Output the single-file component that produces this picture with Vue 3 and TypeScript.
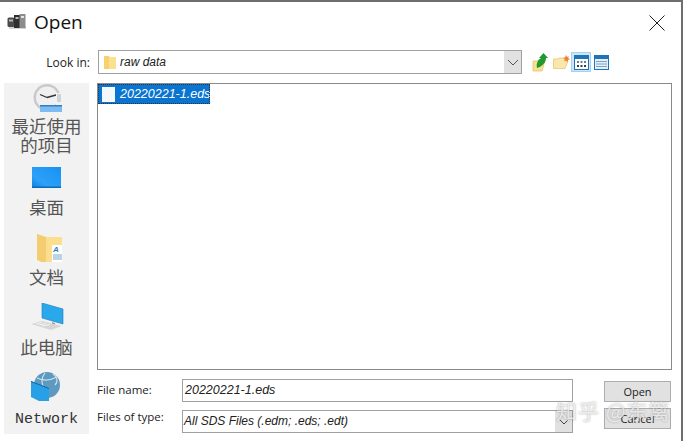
<script setup lang="ts">
const places = ['recent', 'desktop', 'docs', 'pc', 'net']
</script>

<template>
  <div class="dialog">
    <header class="title">
      <svg class="appicon" width="20" height="16" viewBox="0 0 20 16">
        <rect x="2" y="13" width="17" height="3" fill="#d4d4d4" />
        <rect x="0.5" y="4.500" width="7" height="9.500" rx="1.500" fill="#4a4a4a" />
        <rect x="7" y="2" width="6" height="13" fill="#2e2e2e" />
        <rect x="12.500" y="1" width="6" height="14" fill="#8c8c8c" />
        <rect x="14" y="3" width="3" height="2" fill="#e4e4e4" />
        <rect x="8.500" y="4" width="3" height="2" fill="#c2c2c2" />
        <rect x="2" y="6.500" width="4" height="2" fill="#b5b5b5" />
      </svg>
      <span class="titletext">Open</span>
      <svg class="close" width="16" height="16" viewBox="0 0 16 16">
        <path d="M0.500 0.500 L15.500 15.500 M15.500 0.500 L0.500 15.500" stroke="#222" stroke-width="1" fill="none" />
      </svg>
    </header>

    <div class="lookrow">
      <label class="looklabel">Look in:</label>
      <div class="combo">
        <svg width="12" height="14" viewBox="0 0 12 14" class="folder">
          <path d="M0 1 H5 L6 2 H12 V14 H0 Z" fill="#fbe08e" />
          <rect x="0" y="1" width="5" height="13" fill="#f7d070" />
        </svg>
        <span class="combotext">raw data</span>
        <span class="arrow">
          <svg width="12" height="7" viewBox="0 0 12 7"><path d="M1 1 L6 6 L11 1" stroke="#555" fill="none" /></svg>
        </span>
      </div>
      <div class="tools">
        <svg width="17" height="20" viewBox="0 0 17 20">
          <path d="M1 9 H5 L6 8 H13 L10 19 H1 Z" fill="#f8e092" stroke="#e0bd5c" stroke-width="0.700" />
          <path d="M5 16 C4 11 6 8 9 6 L7 6 L11.500 1 L16 6 L14 6 C14 10 11 14 5 16 Z" fill="#1e9a30" />
        </svg>
        <svg width="17" height="14" viewBox="0 0 17 14">
          <path d="M0.500 4 H5 L6 3 H12 V6 H15 L12 13.500 H0.500 Z" fill="#fae7ab" stroke="#e2c268" stroke-width="0.700" />
          <path d="M13 0 L14 2 L16 1 L15 3 L17 4 L15 5 L15 7 L13 5.500 L11 6 L12 4 L10 3 L12 2.500 Z" fill="#f0803c" />
        </svg>
        <span class="viewbtn active">
          <svg width="15" height="15" viewBox="0 0 15 15">
            <rect x="0.500" y="0.500" width="14" height="14" fill="#fff" stroke="#1f73b7" />
            <rect x="0" y="0" width="15" height="4" fill="#1f73b7" />
            <path d="M3 6h2v2H3zM6.500 6h2v2h-2zM10 6h2v2h-2z" fill="#6e7f90" />
            <path d="M3 10h2v2H3zM6.500 10h2v2h-2zM10 10h2v2h-2z" fill="#34404c" />
          </svg>
        </span>
        <svg class="details" width="15" height="15" viewBox="0 0 15 15">
          <rect x="0.500" y="0.500" width="14" height="14" fill="#e3f0fb" stroke="#1f73b7" />
          <rect x="0" y="0" width="15" height="4" fill="#1f73b7" />
          <path d="M2 6.500h11M2 9h11M2 11.500h11" stroke="#7fa3c0" stroke-width="1" />
        </svg>
      </div>
    </div>

    <div class="main">
      <aside class="side" :data-items="places.length">
        <div class="place p-recent">
          <svg width="32" height="28" viewBox="0 0 32 28">
            <circle cx="15" cy="13.500" r="13.500" fill="#c9c9c9" />
            <circle cx="15" cy="13.500" r="11" fill="#f0f0f0" />
            <path d="M15 13.500 L8 10.500 M15 13.500 L24 11" stroke="#333" stroke-width="1.300" />
            <rect x="24" y="9" width="6" height="13" fill="#f2f2f2" />
            <path d="M25 11h4M25 13h4M25 15h4M25 17h4" stroke="#a4b4c4" />
            <rect x="8" y="21" width="22" height="7" fill="#7dbcf0" />
            <rect x="8" y="21" width="22" height="1.500" fill="#2e7fc4" />
          </svg>
          <div class="lbl">最近使用<br />的项目</div>
        </div>
        <div class="place p-desktop">
          <svg width="29" height="21" viewBox="0 0 29 21">
            <defs>
              <linearGradient id="dg" x1="0" y1="1" x2="1" y2="0">
                <stop offset="0" stop-color="#0c7fe0" />
                <stop offset="0.300" stop-color="#2ea0f8" />
                <stop offset="1" stop-color="#1592f4" />
              </linearGradient>
            </defs>
            <rect width="29" height="21" fill="url(#dg)" />
            <rect y="19.500" width="29" height="1.500" fill="#0d6ab8" />
          </svg>
          <div class="lbl">桌面</div>
        </div>
        <div class="place p-docs">
          <svg width="25" height="28" viewBox="0 0 25 28">
            <path d="M0 0 L8 3 H25 V28 H5 L0 26 Z" fill="#fbdf8e" />
            <path d="M0 0 L9 3 V28 H5 L0 26 Z" fill="#f4cd70" />
            <rect x="15" y="11" width="10" height="17" fill="#fff" />
            <text x="16" y="18" class="doca">A</text>
            <path d="M16 21h9M16 23h9M16 25h9" stroke="#79a9c9" />
          </svg>
          <div class="lbl">文档</div>
        </div>
        <div class="place p-pc">
          <svg width="33" height="28" viewBox="0 0 33 28">
            <path d="M11 0 L32 6 V21 L11 15 Z" fill="#2aa8ec" stroke="#1a7cb8" stroke-width="0.600" />
            <path d="M21 19 L24 20 V23 L21 22 Z" fill="#999" />
            <path d="M0 21 L11 18 L31 23 L20 27 Z" fill="#d6d6d6" />
            <path d="M5 21 L11 19.500 M8 22 L15 20.500 M11 23 L19 21.500" stroke="#f3f3f3" />
          </svg>
          <div class="lbl">此电脑</div>
        </div>
        <div class="place p-net">
          <svg width="30" height="29" viewBox="0 0 30 29">
            <circle cx="16" cy="13" r="13" fill="#5d99c0" />
            <path d="M14 1 C10 6 10 12 14 18 M22 2 C27 5 27 10 24 13 M6 6 C12 9 20 8 26 5" stroke="#cfe0ea" stroke-width="1.200" fill="none" />
            <path d="M0 9 L18 16 V29 H8 L0 25 Z" fill="#27a0e6" />
            <path d="M0 9 L18 16 V17 L0 10 Z" fill="#13699f" />
          </svg>
          <div class="lbl net">Network</div>
        </div>
      </aside>

      <div class="content">
        <div class="list">
          <div class="item">
            <span class="fileicon"></span>
            <span class="filename">20220221-1.eds</span>
          </div>
        </div>
        <div class="fields">
          <div class="frow first">
            <label class="flabel">File name:</label>
            <div class="input">20220221-1.eds</div>
            <button class="btn">Open</button>
          </div>
          <div class="frow second">
            <label class="flabel">Files of type:</label>
            <div class="input select">
              <span>All SDS Files (.edm; .eds; .edt)</span>
              <span class="sarrow">
                <svg width="12" height="7" viewBox="0 0 12 7"><path d="M1 1 L6 6 L11 1" stroke="#444" fill="none" /></svg>
              </span>
            </div>
            <button class="btn">Cancel</button>
          </div>
        </div>
      </div>
    </div>

    <div class="watermark">知乎 @东篱</div>
  </div>
</template>

<style>
html, body { margin: 0; background: #fff; }
</style>

<style scoped>
.dialog {
  position: relative;
  box-sizing: border-box;
  width: 683px;
  height: 441px;
  background: #fff;
  border-top: 2px solid #6e6e6e;
  border-right: 2px solid #6e6e6e;
  overflow: hidden;
  font-family: "Liberation Sans", Arial, sans-serif;
  color: #222;
}
.title {
  display: flex;
  align-items: center;
  height: 40px;
  padding: 0 16px 0 7px;
}
.appicon { margin-right: 7px; margin-top: -2px; }
.titletext { font-family: "Open Sans", sans-serif; font-size: 19px; color: #111; flex: 1; margin-top: -1px; }
.close { margin-top: 1px; }
.lookrow {
  display: flex;
  align-items: center;
  height: 24px;
  margin-top: 8px;
}
.looklabel { width: 90px; text-align: right; font-size: 12px; font-family: "Open Sans", sans-serif; color: #222; margin-right: 8px; }
.combo {
  box-sizing: border-box;
  width: 424px;
  height: 24px;
  border: 1px solid #a0a0a0;
  display: flex;
  align-items: center;
  padding-left: 5px;
  background: #fff;
}
.folder { margin-right: 4px; }
.combotext { flex: 1; font-style: italic; font-size: 12px; color: #222; }
.arrow {
  width: 17px;
  height: 22px;
  background: #e1e1e1;
  display: flex;
  align-items: center;
  justify-content: center;
}
.tools { display: flex; align-items: center; margin-left: 10px; }
.tools > svg:nth-child(2) { margin-left: 4px; }
.viewbtn { display: flex; align-items: center; justify-content: center; margin-left: 1px; background: #cde5f8; border: 1px solid #a3d1f3; box-sizing: border-box; width: 20px; height: 20px; }
.details { margin-left: 3px; }
.main {
  display: flex;
  margin-top: 9px;
  padding-left: 4px;
}
.side {
  width: 85px;
  height: 351px;
  background: #f2f2f2;
  display: flex;
  flex-direction: column;
  align-items: center;
}
.place { display: flex; flex-direction: column; align-items: center; }
.lbl {
  font-family: "Noto Sans CJK SC", serif;
  font-size: 17.500px;
  line-height: 19px;
  text-align: center;
  color: #555;
}
.lbl.net { font-family: "Liberation Mono", monospace; font-size: 15px; line-height: 20px; color: #333; }
.p-recent svg { margin-top: 1px; margin-left: 2px; }
.p-recent .lbl { margin-top: 4px; }
.p-desktop { margin-top: 13px; }
.p-desktop .lbl { margin-top: 9px; }
.p-docs { margin-top: 18px; }
.p-docs svg { margin-left: 5px; }
.p-docs .lbl { margin-top: 5px; }
.p-pc { margin-top: 17px; }
.p-pc .lbl { margin-top: 6px; }
.p-pc svg { margin-left: 2px; }
.p-net { margin-top: 16px; }
.p-net .lbl { margin-top: 9px; }
.p-net svg { margin-left: -1px; }
.doca { font: italic bold 8px "Liberation Sans", sans-serif; fill: #2b86b8; }
.content { margin-left: 8px; width: 576px; }
.list {
  box-sizing: border-box;
  width: 575px;
  height: 287px;
  border: 1px solid #8a8a8a;
  padding: 0;
  background: #fff;
}
.item {
  display: inline-flex;
  align-items: center;
  height: 20px;
  width: 112px;
  box-sizing: border-box;
  background: #0a74d1;
  outline: 1px dotted #333;
  outline-offset: -1px;
  padding-left: 4px;
}
.fileicon { width: 13px; height: 15px; background: #f4f7fb; margin-right: 5px; flex: none; }
.filename { color: #fff; font-style: italic; font-size: 12.500px; white-space: nowrap; }
.fields { display: flex; flex-direction: column; }
.frow { display: flex; align-items: flex-start; }
.first { margin-top: 9px; }
.second { margin-top: 8px; }
.flabel { width: 85px; font-family: "Open Sans", sans-serif; font-size: 11.500px; color: #222; padding-top: 3px; }
.second .flabel { padding-top: 0; margin-top: -1px; }
.input {
  box-sizing: border-box;
  width: 391px;
  height: 23px;
  border: 1px solid #a0a0a0;
  font-style: italic;
  font-size: 12.500px;
  line-height: 21px;
  padding-left: 2px;
  color: #222;
  background: #fff;
}
.select { display: flex; justify-content: space-between; padding-left: 1px; font-size: 12px; }
.sarrow { width: 17px; height: 21px; background: #e1e1e1; display: flex; align-items: center; justify-content: center; }
.btn {
  box-sizing: border-box;
  width: 67px;
  height: 21px;
  margin-left: 31px;
  border: 1px solid #adadad;
  background: #e1e1e1;
  font-family: "Open Sans", sans-serif;
  font-size: 11px;
  line-height: 17px;
  color: #222;
  padding: 0;
}
.first .btn { margin-top: 2px; }
.second .btn { margin-top: -2px; }
.watermark {
  position: absolute;
  left: 556px;
  top: 394px;
  font-family: "Noto Sans CJK SC", sans-serif;
  font-size: 21px;
  line-height: 28px;
  letter-spacing: 1px;
  color: rgba(255, 255, 255, 0.72);
  text-shadow: 0 0 2px rgba(100, 100, 100, 0.6);
  white-space: nowrap;
}
</style>
